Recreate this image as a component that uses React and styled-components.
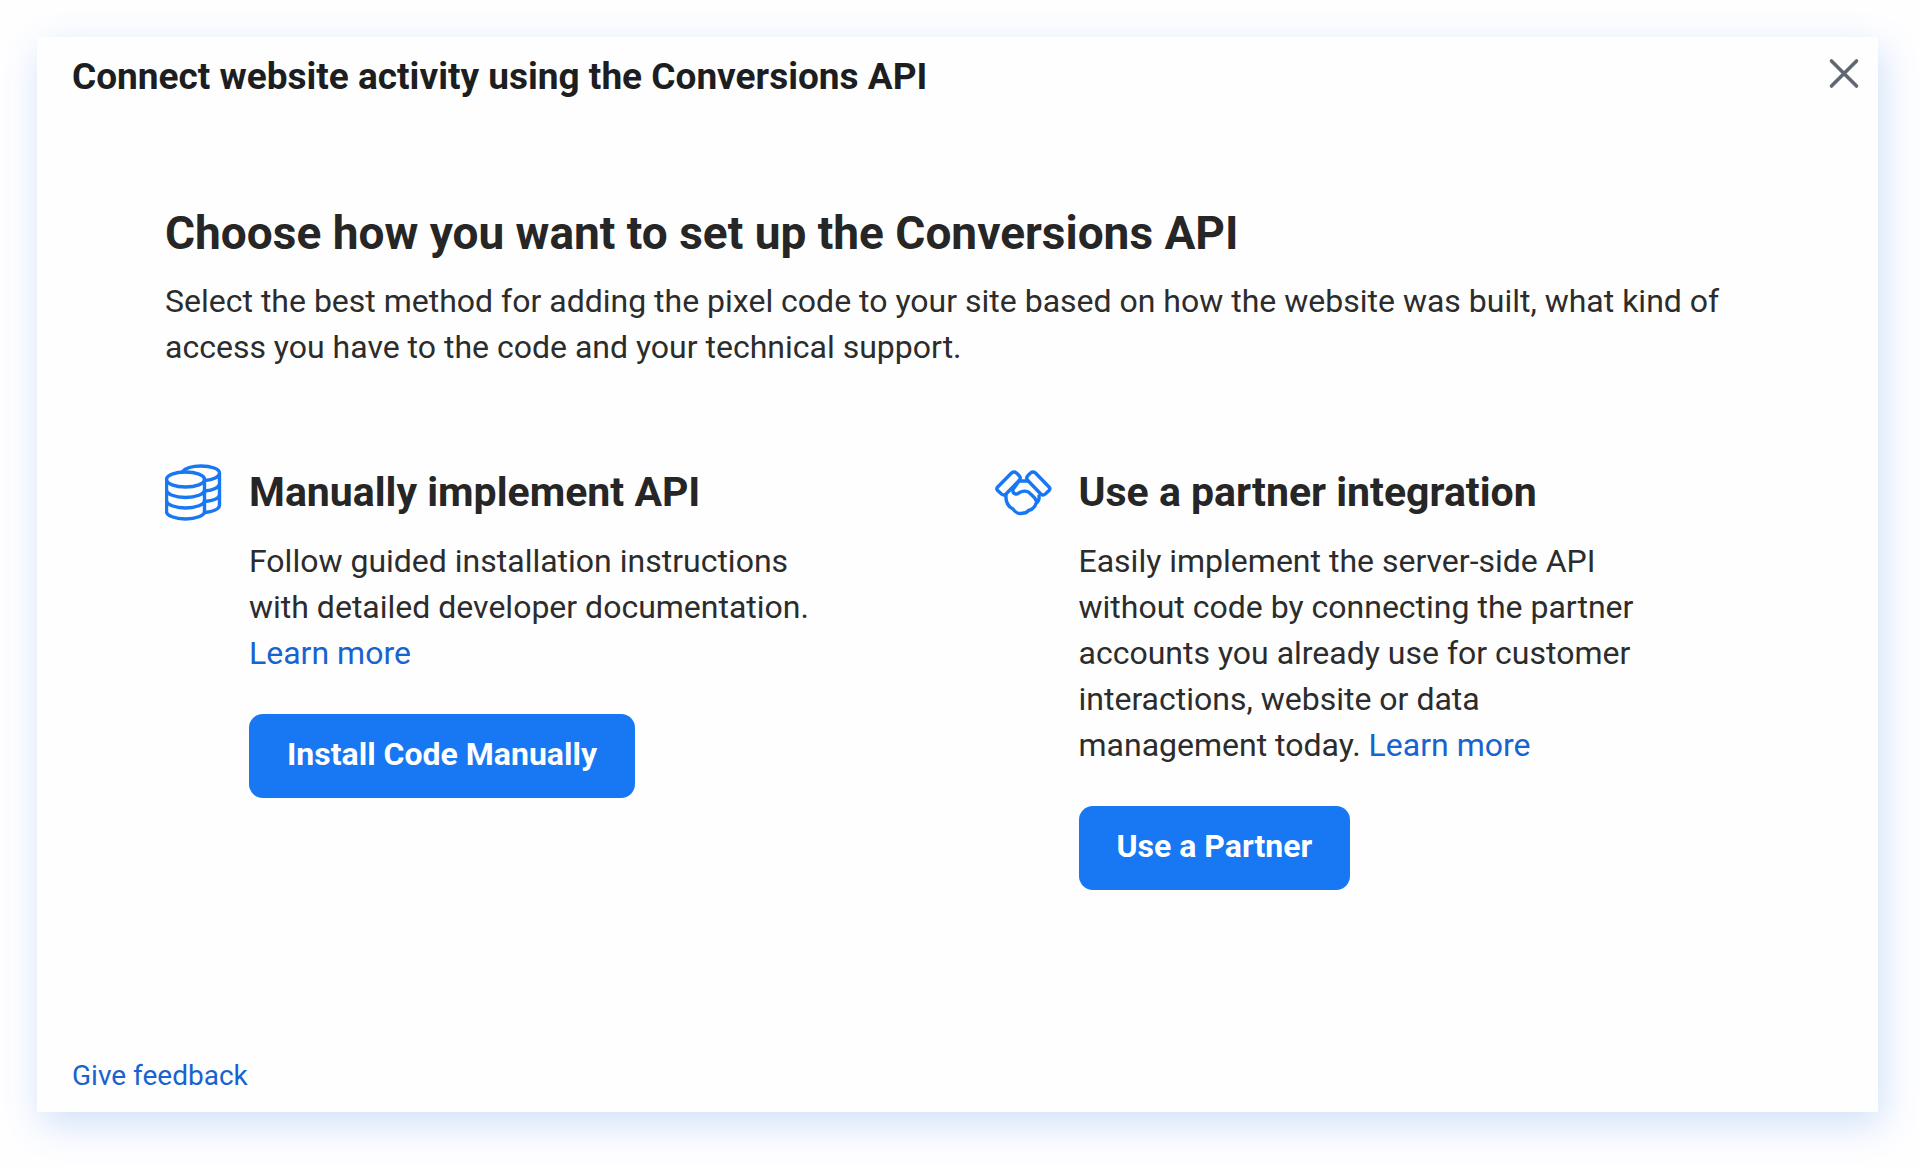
import React from 'react';
import styled, { createGlobalStyle } from 'styled-components';

const GlobalStyle = createGlobalStyle`
  *, *::before, *::after { box-sizing: border-box; }
  body {
    margin: 0;
    background: #fefeff;
    color: #262626;
    font-family: Roboto, "Liberation Sans", sans-serif;
  }
`;

const Page = styled.div`
  display: flex;
  min-height: 100vh;
  padding: 37px 42px 54px 37px;
`;

const Dialog = styled.section`
  flex: 1;
  display: flex;
  flex-direction: column;
  background: #fefefe;
  box-shadow: 4px 12px 36px rgba(24, 104, 220, 0.2);
`;

const Header = styled.header`
  display: flex;
  justify-content: space-between;
  align-items: flex-start;
  padding: 16px 13px 0 35px;
`;

const Title = styled.h1`
  margin: 0;
  color: #1c1e21;
  font-size: 37px;
  line-height: 48px;
  font-weight: 700;
`;

const CloseButton = styled.button`
  display: flex;
  padding: 0;
  border: 0;
  background: none;
  color: #606770;
  cursor: pointer;
`;

const Body = styled.main`
  flex: 1;
  padding: 104px 128px 0;
`;

const Heading = styled.h2`
  margin: 0;
  font-size: 46px;
  line-height: 56px;
  font-weight: 700;
`;

const Text = styled.p`
  margin: 0;
  color: #2c2c2c;
  font-size: 32px;
  line-height: 46px;
`;

const Intro = styled(Text)`
  margin-top: 17px;
`;

const Options = styled.div`
  display: grid;
  grid-template-columns: 1fr 1fr;
  gap: 74px;
  margin-top: 94px;
`;

const Option = styled.article`
  display: flex;
  gap: 26px;
`;

const OptionIcon = styled.svg`
  flex: none;
  width: 58px;
  height: 58px;
  fill: none;
  stroke: #1877f2;
  stroke-width: 3.4;
  stroke-linecap: round;
  stroke-linejoin: round;
`;

const OptionContent = styled.div`
  display: flex;
  flex-direction: column;
  align-items: flex-start;
  max-width: 580px;
`;

const OptionTitle = styled.h3`
  margin: 0 0 18px;
  font-size: 41px;
  line-height: 56px;
  font-weight: 700;
`;

const Link = styled.a`
  color: #1763cf;
  text-decoration: none;
`;

const ActionButton = styled.button`
  height: 84px;
  margin-top: 38px;
  padding: 0 38px 4px;
  border: 0;
  border-radius: 14px;
  background: #1877f2;
  color: #fff;
  font: 700 32px Roboto, "Liberation Sans", sans-serif;
  cursor: pointer;
`;

const Footer = styled.footer`
  padding: 0 35px 16px;
  font-size: 28px;
  line-height: 40px;
`;

function CloseIcon() {
  return (
    <svg width="42" height="42" viewBox="0 0 42 42" fill="none" stroke="currentColor" strokeWidth="3.6" strokeLinecap="round" aria-hidden="true">
      <path d="M8.500 8 33.500 33M33.500 8 8.500 33" />
    </svg>
  );
}

function DatabaseIcon() {
  return (
    <OptionIcon viewBox="0 0 58 58" aria-hidden="true">
      <ellipse cx="20.500" cy="15.500" rx="19" ry="7.500" />
      <path d="M1.500 15.500V47.500C1.500 51.600 10 55 20.500 55S39.500 51.600 39.500 47.500V15.500" />
      <path d="M1.500 26C1.500 30 10 33.500 20.500 33.500S39.500 30 39.500 26M1.500 36.500C1.500 40.600 10 44 20.500 44S39.500 40.600 39.500 36.500" />
      <path d="M17 8C20 4.500 27 2 36 2 46.500 2 54.500 5 54.500 9S48 16 40 16.500M54.500 9V41C54.500 45 48 47.500 40 48.500M54.500 19.500C54.500 23.500 48 26.500 40 27M54.500 30.500C54.500 34.500 48 37 40 37.500" />
    </OptionIcon>
  );
}

function HandshakeIcon() {
  return (
    <OptionIcon viewBox="0 0 58 58" aria-hidden="true">
      <path d="M2.700 23 16.500 9Q19 7 21.500 9L24.300 11.800Q26.300 14 24.200 16.500L11 30Q8.800 32 6.500 30L2.700 26.500Q1 24.800 2.700 23Z" />
      <path d="M54 23 40.500 9Q38 7 35.500 9L32.700 11.800Q30.700 14 32.800 16.500L45.800 30Q48 32 50.300 30L54 26.500Q55.700 24.800 54 23Z" />
      <path d="M25 17H32.500M11 31C10.500 37 13 42.500 18 45 20 48.500 24 50 27 49.300 30.500 49.300 32.500 48 33.500 46.500 37.500 45.500 40 43 41 39.500 43.500 37.500 44.500 35 44 32" />
      <path d="M24 17 18 25.500C17 29.500 21.500 31.500 24.500 28.500 28 26.500 31 27 33.500 28 36 31 39 31 41.500 37.500" />
    </OptionIcon>
  );
}

export default function App() {
  return (
    <>
      <GlobalStyle />
      <Page>
        <Dialog role="dialog" aria-labelledby="dialog-title">
          <Header>
            <Title id="dialog-title">Connect website activity using the Conversions API</Title>
            <CloseButton type="button" aria-label="Close">
              <CloseIcon />
            </CloseButton>
          </Header>
          <Body>
            <Heading>Choose how you want to set up the Conversions API</Heading>
            <Intro>
              Select the best method for adding the pixel code to your site based on how the website was built, what kind of
              access you have to the code and your technical support.
            </Intro>
            <Options>
              <Option>
                <DatabaseIcon />
                <OptionContent>
                  <OptionTitle>Manually implement API</OptionTitle>
                  <Text>
                    Follow guided installation instructions with detailed developer documentation.{' '}
                    <Link href="#manual">Learn more</Link>
                  </Text>
                  <ActionButton type="button">Install Code Manually</ActionButton>
                </OptionContent>
              </Option>
              <Option>
                <HandshakeIcon />
                <OptionContent>
                  <OptionTitle>Use a partner integration</OptionTitle>
                  <Text>
                    Easily implement the server-side API without code by connecting the partner accounts you already use for
                    customer interactions, website or data management today. <Link href="#partner">Learn more</Link>
                  </Text>
                  <ActionButton type="button">Use a Partner</ActionButton>
                </OptionContent>
              </Option>
            </Options>
          </Body>
          <Footer>
            <Link href="#feedback">Give feedback</Link>
          </Footer>
        </Dialog>
      </Page>
    </>
  );
}
